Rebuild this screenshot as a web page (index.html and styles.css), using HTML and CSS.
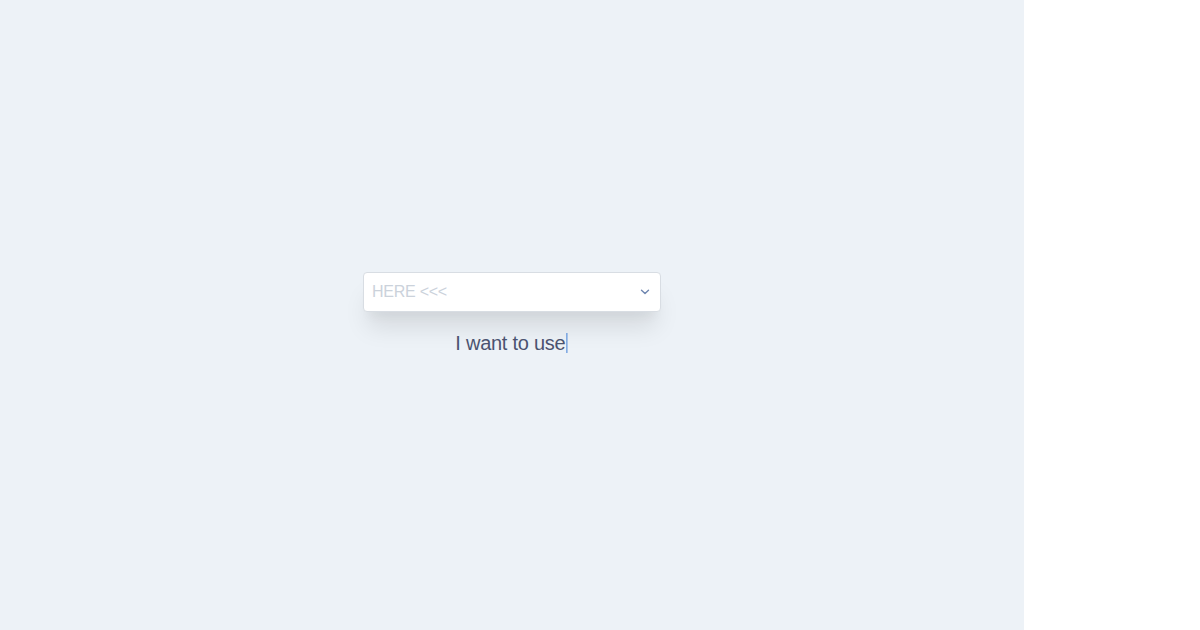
FILE: index.html
```html
<!DOCTYPE html>
<html>
<head>
<meta charset="utf-8">
<link rel="stylesheet" href="styles.css">
</head>
<body>
<div class="page">
  <main class="stage">
    <div class="content">
      <div class="select">
        <span class="placeholder">HERE &lt;&lt;&lt;</span>
        <svg class="chev" width="10" height="6" viewBox="0 0 10 6"><path d="M1.5 1.2 L5 4.6 L8.5 1.2" fill="none" stroke="#6f86b0" stroke-width="1.4" stroke-linecap="round" stroke-linejoin="round"/></svg>
      </div>
      <p class="typed">I want to use<span class="caret"></span></p>
    </div>
  </main>
  <aside class="side"></aside>
</div>
</body>
</html>
```
FILE: styles.css
```css
html, body {
  margin: 0;
  padding: 0;
  height: 100%;
}
body {
  font-family: "Liberation Sans", Arial, sans-serif;
  background: #ffffff;
}
.page {
  display: flex;
  height: 630px;
}
.stage {
  width: 1024px;
  background: #edf2f7;
  display: flex;
  align-items: center;
  justify-content: center;
}
.side {
  flex: 1;
  background: #ffffff;
}
.content {
  display: flex;
  flex-direction: column;
  align-items: center;
  margin-top: -4px;
}
.select {
  box-sizing: border-box;
  width: 298px;
  height: 40px;
  background: #ffffff;
  border: 1px solid #d8dde3;
  border-radius: 4px;
  display: flex;
  align-items: center;
  justify-content: space-between;
  padding: 0 10px 0 8px;
  box-shadow: 0 20px 25px -5px rgba(0,0,0,0.1), 0 10px 10px -5px rgba(0,0,0,0.04);
}
.placeholder {
  font-size: 16px;
  color: #cbd2db;
  line-height: 20px;
  letter-spacing: -0.25px;
}
.chev {
  display: block;
}
.typed {
  margin: 19px 0 0;
  font-size: 20px;
  line-height: 24px;
  color: #4b5370;
  letter-spacing: -0.25px;
  display: flex;
  align-items: center;
  transform: translateX(-0.6px);
}
.caret {
  display: inline-block;
  width: 1px;
  height: 20px;
  margin-left: 1px;
  background: #3f7fd8;
}
```
